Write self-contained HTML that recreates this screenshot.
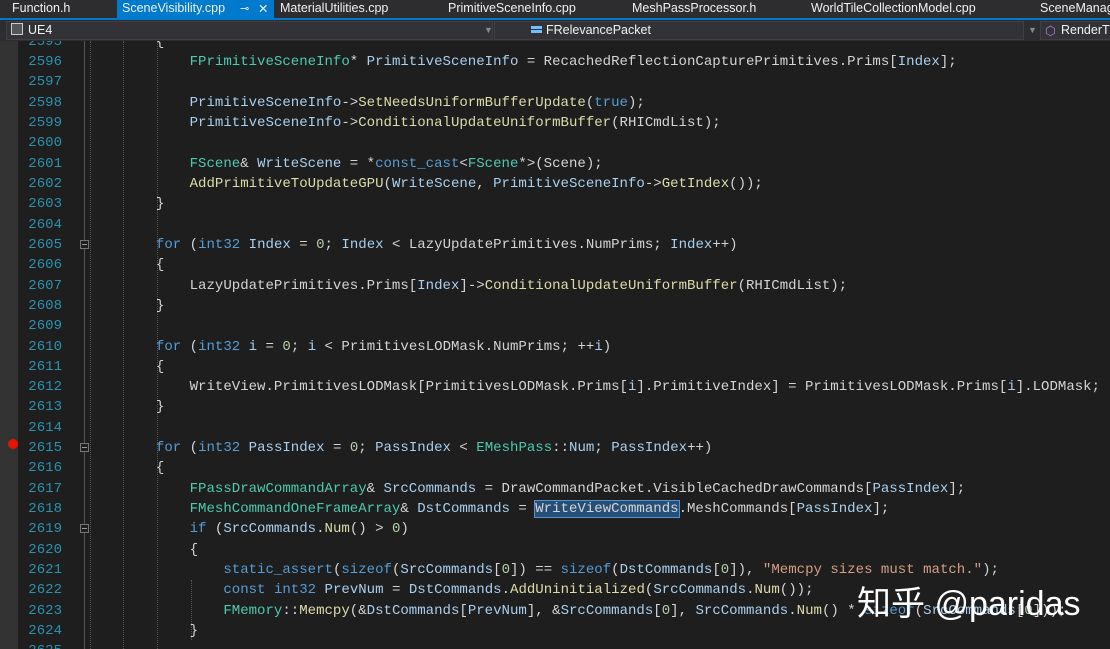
<!DOCTYPE html>
<html><head><meta charset="utf-8"><style>
*{margin:0;padding:0;box-sizing:border-box}
body{width:1110px;height:649px;overflow:hidden;background:#1e1e1e;position:relative;font-family:"Liberation Sans",sans-serif}
.tabs{position:absolute;left:0;top:0;width:1110px;height:18px;background:#2d2d30;color:#f1f1f1;font-size:12.5px}
.tabs span{position:absolute;top:1px;white-space:nowrap}
.act{position:absolute;left:117px;top:0;width:157px;height:18px;background:#007acc}
.bl{position:absolute;left:0;top:18px;width:1110px;height:2px;background:#007acc}
.nav{position:absolute;left:0;top:20px;width:1110px;height:21px;background:#2d2d30;color:#f1f1f1;font-size:12.5px}
.dd{position:absolute;top:1px;height:19px;background:#333337;border:1px solid #3f3f46}
.nav span{position:absolute;top:3px;white-space:nowrap}
.margin{position:absolute;left:0;top:41px;width:18px;height:608px;background:#333333}
.code{position:absolute;left:0;top:41px;width:1110px;height:608px;overflow:hidden}
.ln{position:absolute;left:18px;width:44px;text-align:right;color:#2b91af;font-family:"Liberation Mono",monospace;font-size:14.05px;line-height:20.32px;height:20.32px}
.l{position:absolute;left:122.2px;white-space:pre;color:#d4d4d4;font-family:"Liberation Mono",monospace;font-size:14.05px;line-height:20.32px;height:20.32px}
.k{color:#569cd6}.t{color:#4ec9b0}.f{color:#dcdcaa}.v{color:#a8cfef}.s{color:#d69d85}.n{color:#b5cea8}
.sel{background:#264f78;outline:1px solid #5a8fd0}
.g{position:absolute;top:0;height:608px;border-left:1px dotted #555}
.fold{position:absolute;left:84px;top:0;height:608px;border-left:1px solid #555}
.fb{position:absolute;left:80px;width:9px;height:9px;border:1px solid #777;background:#1e1e1e}
.fb::after{content:"";position:absolute;left:1px;top:3px;width:5px;height:1px;background:#999}
.wm{position:absolute;left:857px;top:576px;color:#fff;font-size:34px;font-family:"Liberation Sans","Noto Sans CJK SC",sans-serif;white-space:nowrap}
</style></head><body>
<div class="tabs">
<div class="act"></div>
<span style="left:12px">Function.h</span>
<span style="left:122px">SceneVisibility.cpp</span>
<span style="left:240px;font-size:11px;top:2px">⊸</span>
<span style="left:258px">✕</span>
<span style="left:280px">MaterialUtilities.cpp</span>
<span style="left:448px">PrimitiveSceneInfo.cpp</span>
<span style="left:632px">MeshPassProcessor.h</span>
<span style="left:811px">WorldTileCollectionModel.cpp</span>
<span style="left:1040px">SceneManag</span>
</div>
<div class="bl"></div>
<div class="nav">
<div class="dd" style="left:6px;width:487px"></div>
<div class="dd" style="left:494px;width:530px"></div>
<div class="dd" style="left:1040px;width:80px"></div>
<span style="left:11px;top:3px;width:12px;height:12px;border:1px solid #ccc;background:#555"></span>
<span style="left:28px">UE4</span>
<span style="left:484px;color:#888;font-size:9px;top:5px">▼</span>
<span style="left:531px;top:6px;width:11px;height:7px;border-top:3px solid #75beff;border-bottom:3px solid #75beff"></span>
<span style="left:546px">FRelevancePacket</span>
<span style="left:1028px;color:#888;font-size:9px;top:5px">▼</span>
<span style="left:1045px;color:#b180d7">⬡</span>
<span style="left:1061px">RenderT</span>
</div>
<div class="margin"></div>
<div class="code">
<div class="fold"></div>
<div class="g" style="left:90px"></div>
<div class="g" style="left:123px"></div>
<div class="g" style="left:157px"></div>
<div class="g" style="left:191px;top:539px;height:60px"></div>
<div class="fb" style="left:80px;top:199px"></div>
<div class="fb" style="left:80px;top:402px"></div>
<div class="fb" style="left:80px;top:483px"></div>
<div style="position:absolute;left:8px;top:398px;width:10px;height:10px;border-radius:50%;background:#e51400"></div>

<div class="ln" style="top:-9.3px">2595</div><div class="l" style="top:-9.3px">    {</div>
<div class="ln" style="top:11px">2596</div><div class="l" style="top:11px">        <span class="t">FPrimitiveSceneInfo</span>* <span class="v">PrimitiveSceneInfo</span> = RecachedReflectionCapturePrimitives.Prims[<span class="v">Index</span>];</div>
<div class="ln" style="top:31.3px">2597</div>
<div class="ln" style="top:51.6px">2598</div><div class="l" style="top:51.6px">        <span class="v">PrimitiveSceneInfo</span>-&gt;<span class="f">SetNeedsUniformBufferUpdate</span>(<span class="k">true</span>);</div>
<div class="ln" style="top:72px">2599</div><div class="l" style="top:72px">        <span class="v">PrimitiveSceneInfo</span>-&gt;<span class="f">ConditionalUpdateUniformBuffer</span>(RHICmdList);</div>
<div class="ln" style="top:92.3px">2600</div>
<div class="ln" style="top:112.6px">2601</div><div class="l" style="top:112.6px">        <span class="t">FScene</span>&amp; <span class="v">WriteScene</span> = *<span class="k">const_cast</span>&lt;<span class="t">FScene</span>*&gt;(Scene);</div>
<div class="ln" style="top:132.9px">2602</div><div class="l" style="top:132.9px">        <span class="f">AddPrimitiveToUpdateGPU</span>(<span class="v">WriteScene</span>, <span class="v">PrimitiveSceneInfo</span>-&gt;<span class="f">GetIndex</span>());</div>
<div class="ln" style="top:153.2px">2603</div><div class="l" style="top:153.2px">    }</div>
<div class="ln" style="top:173.6px">2604</div>
<div class="ln" style="top:193.9px">2605</div><div class="l" style="top:193.9px">    <span class="k">for</span> (<span class="k">int32</span> <span class="v">Index</span> = <span class="n">0</span>; <span class="v">Index</span> &lt; LazyUpdatePrimitives.NumPrims; <span class="v">Index</span>++)</div>
<div class="ln" style="top:214.2px">2606</div><div class="l" style="top:214.2px">    {</div>
<div class="ln" style="top:234.5px">2607</div><div class="l" style="top:234.5px">        LazyUpdatePrimitives.Prims[<span class="v">Index</span>]-&gt;<span class="f">ConditionalUpdateUniformBuffer</span>(RHICmdList);</div>
<div class="ln" style="top:254.8px">2608</div><div class="l" style="top:254.8px">    }</div>
<div class="ln" style="top:275.2px">2609</div>
<div class="ln" style="top:295.5px">2610</div><div class="l" style="top:295.5px">    <span class="k">for</span> (<span class="k">int32</span> <span class="v">i</span> = <span class="n">0</span>; <span class="v">i</span> &lt; PrimitivesLODMask.NumPrims; ++<span class="v">i</span>)</div>
<div class="ln" style="top:315.8px">2611</div><div class="l" style="top:315.8px">    {</div>
<div class="ln" style="top:336.1px">2612</div><div class="l" style="top:336.1px">        WriteView.PrimitivesLODMask[PrimitivesLODMask.Prims[<span class="v">i</span>].PrimitiveIndex] = PrimitivesLODMask.Prims[<span class="v">i</span>].LODMask;</div>
<div class="ln" style="top:356.4px">2613</div><div class="l" style="top:356.4px">    }</div>
<div class="ln" style="top:376.8px">2614</div>
<div class="ln" style="top:397.1px">2615</div><div class="l" style="top:397.1px">    <span class="k">for</span> (<span class="k">int32</span> <span class="v">PassIndex</span> = <span class="n">0</span>; <span class="v">PassIndex</span> &lt; <span class="t">EMeshPass</span>::<span class="v">Num</span>; <span class="v">PassIndex</span>++)</div>
<div class="ln" style="top:417.4px">2616</div><div class="l" style="top:417.4px">    {</div>
<div class="ln" style="top:437.7px">2617</div><div class="l" style="top:437.7px">        <span class="t">FPassDrawCommandArray</span>&amp; <span class="v">SrcCommands</span> = DrawCommandPacket.VisibleCachedDrawCommands[<span class="v">PassIndex</span>];</div>
<div class="ln" style="top:458px">2618</div><div class="l" style="top:458px">        <span class="t">FMeshCommandOneFrameArray</span>&amp; <span class="v">DstCommands</span> = <span class="sel">WriteViewCommands</span>.MeshCommands[<span class="v">PassIndex</span>];</div>
<div class="ln" style="top:478.4px">2619</div><div class="l" style="top:478.4px">        <span class="k">if</span> (<span class="v">SrcCommands</span>.<span class="f">Num</span>() &gt; <span class="n">0</span>)</div>
<div class="ln" style="top:498.7px">2620</div><div class="l" style="top:498.7px">        {</div>
<div class="ln" style="top:519px">2621</div><div class="l" style="top:519px">            <span class="k">static_assert</span>(<span class="k">sizeof</span>(<span class="v">SrcCommands</span>[<span class="n">0</span>]) == <span class="k">sizeof</span>(<span class="v">DstCommands</span>[<span class="n">0</span>]), <span class="s">"Memcpy sizes must match."</span>);</div>
<div class="ln" style="top:539.3px">2622</div><div class="l" style="top:539.3px">            <span class="k">const</span> <span class="k">int32</span> <span class="v">PrevNum</span> = <span class="v">DstCommands</span>.<span class="f">AddUninitialized</span>(<span class="v">SrcCommands</span>.<span class="f">Num</span>());</div>
<div class="ln" style="top:559.6px">2623</div><div class="l" style="top:559.6px">            <span class="t">FMemory</span>::<span class="f">Memcpy</span>(&amp;<span class="v">DstCommands</span>[<span class="v">PrevNum</span>], &amp;<span class="v">SrcCommands</span>[<span class="n">0</span>], <span class="v">SrcCommands</span>.<span class="f">Num</span>() * <span class="k">sizeof</span>(<span class="v">SrcCommands</span>[<span class="n">0</span>]));</div>
<div class="ln" style="top:580px">2624</div><div class="l" style="top:580px">        }</div>
<div class="ln" style="top:600.3px">2625</div>
</div>
<div class="wm">知乎 @paridas</div>
</body></html>
